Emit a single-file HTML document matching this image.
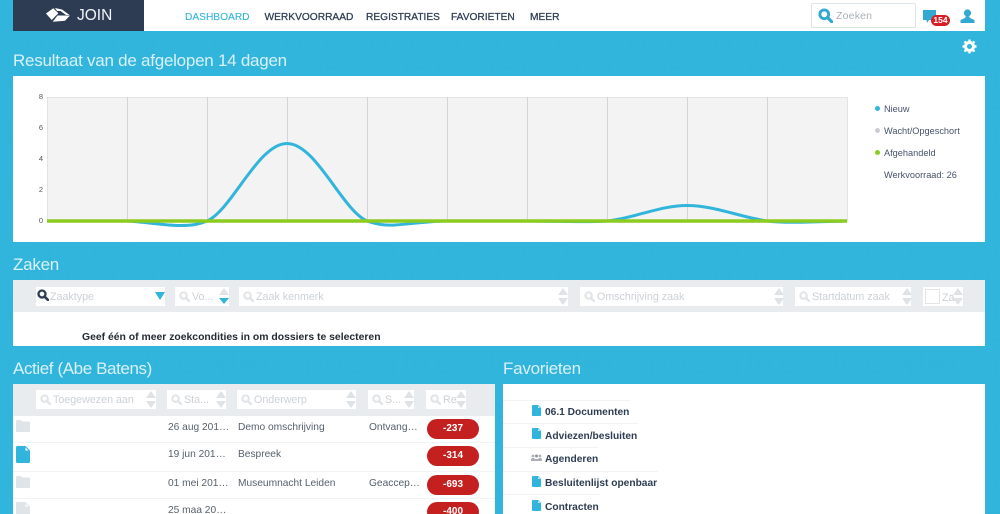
<!DOCTYPE html>
<html lang="nl">
<head>
<meta charset="utf-8">
<title>JOIN Dashboard</title>
<style>
html,body{margin:0;padding:0;width:1000px;height:514px;overflow:hidden;background:#31b5dc;font-family:"Liberation Sans",sans-serif;}
body{position:relative;}
.a{position:absolute;white-space:nowrap;}
.box{position:absolute;background:#fff;}
.nav{position:absolute;top:11px;font-size:10.2px;color:#2e3d52;line-height:13px;white-space:nowrap;-webkit-text-stroke:.25px #2e3d52;}
.h{position:absolute;color:#d9f1f8;font-size:17px;line-height:22px;white-space:nowrap;letter-spacing:-.25px;}
.f{position:absolute;background:#fff;height:19px;font-size:10.7px;line-height:20px;color:#ccd1d6;white-space:nowrap;overflow:hidden;}
.f span{position:absolute;top:0;}
.f svg{position:absolute;left:4px;top:4px;}
.f svg.s{top:1px;width:10px;height:17px;}
.t{position:absolute;font-size:10.2px;line-height:14px;color:#56606c;white-space:nowrap;}
.b{position:absolute;left:427px;width:52px;height:20px;border-radius:10px;background:#c52020;color:#fff;font-size:10px;font-weight:700;line-height:20px;text-align:center;}
.r{position:absolute;height:1px;background:#f1f3f5;}
.l{position:absolute;left:545px;font-size:10.2px;font-weight:700;line-height:14px;color:#2e3d52;white-space:nowrap;}
.leg{position:absolute;left:884px;font-size:9.2px;line-height:12px;color:#46526a;white-space:nowrap;}
.dot{position:absolute;left:875px;width:5px;height:5px;border-radius:50%;}
.y{position:absolute;left:37px;width:6px;font-size:7.5px;line-height:8px;color:#555;text-align:right;}
</style>
</head>
<body>
<svg class="a" style="left:0;top:0;" width="1000" height="514">
<defs>
<pattern id="bgp" width="86" height="58" patternUnits="userSpaceOnUse">
<path d="M8 6V24H20M34 14H50V30M62 4V20M70 10H82V18H70ZM14 38H28V52M42 36V50H56M68 34V52" fill="none" stroke="#30b2d9" stroke-width="1"/>
</pattern>
</defs>
<rect width="1000" height="514" fill="url(#bgp)"/>
</svg>
<svg width="0" height="0" style="position:absolute">
<defs>
<symbol id="mag" viewBox="0 0 12 12"><circle cx="5" cy="5" r="3.5" fill="none" stroke="currentColor" stroke-width="2.3"/><path d="M7.8 7.8L11 11" stroke="currentColor" stroke-width="2.6" stroke-linecap="round"/></symbol>
<symbol id="sort" viewBox="0 0 10 17"><path d="M5 0L10 7H0Z" fill="#dfe3e6"/><path d="M0 10H10L5 17Z" fill="#dfe3e6"/></symbol>
<symbol id="sortb" viewBox="0 0 10 17"><path d="M5 0L10 7H0Z" fill="#dfe3e6"/><path d="M0 10H10L5 16Z" fill="#31b5dc"/></symbol>
<symbol id="doc" viewBox="0 0 14 17"><path d="M1.5 0H9.5L14 4.5V15.5A1.500 1.500 0 0 1 12.5 17H1.5A1.500 1.500 0 0 1 0 15.5V1.500A1.500 1.500 0 0 1 1.5 0Z" fill="currentColor"/><path d="M9.5 1.500L12.500 4.500H9.500Z" fill="#fff"/></symbol>
<symbol id="folder" viewBox="0 0 14 12"><path d="M1 0H5L6.500 1.500H13A1 1 0 0 1 14 2.500V11A1 1 0 0 1 13 12H1A1 1 0 0 1 0 11V1A1 1 0 0 1 1 0Z" fill="#dfe4e8"/></symbol>
</defs>
</svg>

<!-- Header -->
<div class="box" style="left:13px;top:0;width:972px;height:31px;"></div>
<div class="a" style="left:13px;top:0;width:131px;height:31px;background:#2d3c53;"></div>
<svg class="a" style="left:40px;top:0;" width="40" height="31" viewBox="40 0 40 31">
<path d="M46 13.500L53.300 8.300L58.300 13.300L51.700 20Z" fill="#fff"/>
<path d="M55 8L62 9.500L69.500 15H66L60.500 11L57 11Z" fill="#fff"/>
<path d="M57.500 15.500H70L65 20.700L52.700 21.700Z" fill="#fff"/>
</svg>
<div class="a" style="left:77px;top:6px;font-size:15.5px;line-height:20px;color:#f2f5f7;">JOIN</div>
<div class="nav" style="left:185px;color:#31b5dc;-webkit-text-stroke:.1px #31b5dc;">DASHBOARD</div>
<div class="nav" style="left:264.5px;">WERKVOORRAAD</div>
<div class="nav" style="left:366px;">REGISTRATIES</div>
<div class="nav" style="left:451px;">FAVORIETEN</div>
<div class="nav" style="left:530px;">MEER</div>

<div class="a" style="left:811px;top:3px;width:103px;height:23px;border:1px solid #dde5ea;border-radius:2px;background:#fff;"></div>
<svg class="a" style="left:818px;top:8px;color:#31a9d2;" width="15" height="15"><use href="#mag"/></svg>
<div class="a" style="left:836px;top:9px;font-size:10.500px;line-height:14px;color:#a9afb4;letter-spacing:.2px;">Zoeken</div>
<svg class="a" style="left:923px;top:10px;" width="14" height="14" viewBox="0 0 14 14"><path d="M0 0H13V10H6L4 13L3.500 10H0Z" fill="#31a9d2"/></svg>
<div class="a" style="left:931px;top:15px;width:19px;height:11px;border-radius:6px;background:#d81f26;color:#fff;font-size:8.500px;font-weight:700;line-height:11px;text-align:center;">154</div>
<svg class="a" style="left:960px;top:9px;" width="15" height="14" viewBox="0 0 15 14"><circle cx="7.500" cy="4" r="3.600" fill="#31a9d2"/><path d="M5.500 7.500H9.500L10 9L14.500 11V14H.5V11L5 9Z" fill="#31a9d2"/></svg>

<!-- Gear -->
<svg class="a" style="left:962px;top:39px;" width="15" height="15" viewBox="0 0 15 15"><circle cx="7.500" cy="7.500" r="4" fill="none" stroke="#fff" stroke-width="3"/><path d="M7.500 .5V3M7.500 12V14.500M.5 7.500H3M12 7.500H14.500M2.500 2.500L4.200 4.200M10.800 10.800L12.500 12.500M2.500 12.500L4.200 10.800M10.800 4.200L12.500 2.500" stroke="#fff" stroke-width="2.400"/></svg>

<!-- Chart panel -->
<div class="h" style="left:13px;top:50px;">Resultaat van de afgelopen 14 dagen</div>
<div class="box" style="left:13px;top:76px;width:972px;height:166px;"></div>
<div class="y" style="top:93px;">8</div>
<div class="y" style="top:124px;">6</div>
<div class="y" style="top:155px;">4</div>
<div class="y" style="top:186px;">2</div>
<div class="y" style="top:217px;">0</div>
<svg class="a" style="left:40px;top:90px;" width="820" height="140" viewBox="40 90 820 140">
<rect x="47.500" y="97.500" width="800" height="124" fill="#f3f3f3" stroke="#e3e3e3"/>
<path d="M127.500 97V221M207.500 97V221M287.500 97V221M367.500 97V221M447.500 97V221M527.500 97V221M607.500 97V221M687.500 97V221M767.500 97V221" stroke="#d2d4d9" stroke-width="1"/>
<path d="M47 221H127C145 222 165 225.500 180 225.500C193 225.500 200 224 207 221C232 210 258 143.500 287 143.500C316 143.500 342 210 367 221C375 224 385 225.500 395 225C412 224 430 221 447 221H527C550 221 585 222.500 607 221C635 218 660 205.500 687 205.500C714 205.500 740 217 767 221C780 222.500 795 222.500 810 222L847 221" fill="none" stroke="#33b5db" stroke-width="3"/>
<path d="M47 221H847" fill="none" stroke="#8ccc1e" stroke-width="3.500"/>
</svg>
<div class="dot" style="top:105.500px;background:#31b5dc;"></div>
<div class="leg" style="top:102.500px;">Nieuw</div>
<div class="dot" style="top:127.500px;background:#c9ccd1;"></div>
<div class="leg" style="top:124.500px;">Wacht/Opgeschort</div>
<div class="dot" style="top:149.500px;background:#8ccc1e;"></div>
<div class="leg" style="top:146.500px;">Afgehandeld</div>
<div class="leg" style="top:168.500px;">Werkvoorraad: 26</div>

<!-- Zaken -->
<div class="h" style="left:13px;top:254px;">Zaken</div>
<div class="box" style="left:13px;top:280px;width:972px;height:66px;"></div>
<div class="a" style="left:13px;top:280px;width:972px;height:32px;background:#e8ecef;"></div>

<div class="f" style="left:36px;top:287px;width:129px;"><svg style="left:1px;top:2px;color:#2d3c53;" width="12" height="12"><use href="#mag"/></svg><span style="left:14px;">Zaaktype</span></div>
<svg class="a" style="left:155px;top:292px;" width="10" height="8" viewBox="0 0 10 8"><path d="M0 0H10L5 8Z" fill="#31b5dc"/></svg>

<div class="f" style="left:175px;top:287px;width:54px;"><svg style="color:#e2e5e8;" width="11" height="11"><use href="#mag"/></svg><span style="left:17px;">Vo...</span><svg class="s" style="left:44px;"><use href="#sortb"/></svg></div>
<div class="f" style="left:239px;top:287px;width:329px;"><svg style="color:#e2e5e8;" width="11" height="11"><use href="#mag"/></svg><span style="left:17px;">Zaak kenmerk</span><svg class="s" style="left:319px;"><use href="#sort"/></svg></div>
<div class="f" style="left:580px;top:287px;width:203px;"><svg style="color:#e2e5e8;" width="11" height="11"><use href="#mag"/></svg><span style="left:17px;">Omschrijving zaak</span><svg class="s" style="left:194px;"><use href="#sort"/></svg></div>
<div class="f" style="left:795px;top:287px;width:116px;"><svg style="color:#e2e5e8;" width="11" height="11"><use href="#mag"/></svg><span style="left:17px;">Startdatum zaak</span><svg class="s" style="left:107px;"><use href="#sort"/></svg></div>
<div class="f" style="left:923px;top:287px;width:40px;"><div style="position:absolute;left:2px;top:2px;width:13px;height:13px;border:1px solid #e2e5e8;"></div><span style="left:19px;top:1px;">Za</span><svg class="s" style="left:30px;"><use href="#sort"/></svg></div>

<div class="a" style="left:82px;top:331px;font-size:10.400px;font-weight:700;line-height:14px;color:#252b33;">Geef één of meer zoekcondities in om dossiers te selecteren</div>

<!-- Actief -->
<div class="h" style="left:13px;top:358px;letter-spacing:-.4px;">Actief (Abe Batens)</div>
<div class="box" style="left:13px;top:384px;width:482px;height:130px;"></div>
<div class="a" style="left:13px;top:384px;width:482px;height:32px;background:#e8ecef;"></div>

<div class="f" style="left:36px;top:390px;width:120px;"><svg style="color:#e2e5e8;" width="11" height="11"><use href="#mag"/></svg><span style="left:17px;">Toegewezen aan</span><svg class="s" style="left:110px;"><use href="#sort"/></svg></div>
<div class="f" style="left:167px;top:390px;width:59px;"><svg style="color:#e2e5e8;" width="11" height="11"><use href="#mag"/></svg><span style="left:17px;">Sta...</span><svg class="s" style="left:49px;"><use href="#sort"/></svg></div>
<div class="f" style="left:237px;top:390px;width:119px;"><svg style="color:#e2e5e8;" width="11" height="11"><use href="#mag"/></svg><span style="left:17px;">Onderwerp</span><svg class="s" style="left:109px;"><use href="#sort"/></svg></div>
<div class="f" style="left:368px;top:390px;width:46px;"><svg style="color:#e2e5e8;" width="11" height="11"><use href="#mag"/></svg><span style="left:17px;">S...</span><svg class="s" style="left:36px;"><use href="#sort"/></svg></div>
<div class="f" style="left:426px;top:390px;width:40px;"><svg style="color:#e2e5e8;" width="11" height="11"><use href="#mag"/></svg><span style="left:17px;">Re...</span><svg class="s" style="left:30px;"><use href="#sort"/></svg></div>

<svg class="a" style="left:16px;top:420px;" width="14" height="12"><use href="#folder"/></svg>
<div class="t" style="left:168px;top:421px;">26 aug 201…</div>
<div class="t" style="left:238px;top:421px;">Demo omschrijving</div>
<div class="t" style="left:369px;top:421px;">Ontvang…</div>
<div class="b" style="top:419px;">-237</div>
<div class="r" style="left:13px;top:442px;width:482px;"></div>

<svg class="a" style="left:16px;top:446px;color:#31b5dc;" width="14" height="17"><use href="#doc"/></svg>
<div class="t" style="left:168px;top:448px;">19 jun 201…</div>
<div class="t" style="left:238px;top:448px;">Bespreek</div>
<div class="b" style="top:446px;">-314</div>
<div class="r" style="left:13px;top:471px;width:482px;"></div>

<svg class="a" style="left:16px;top:476px;" width="14" height="12"><use href="#folder"/></svg>
<div class="t" style="left:168px;top:477px;">01 mei 201…</div>
<div class="t" style="left:238px;top:477px;">Museumnacht Leiden</div>
<div class="t" style="left:369px;top:477px;">Geaccep…</div>
<div class="b" style="top:475px;">-693</div>
<div class="r" style="left:13px;top:498px;width:482px;"></div>

<svg class="a" style="left:16px;top:502px;color:#dfe4e8;" width="14" height="17"><use href="#doc"/></svg>
<div class="t" style="left:168px;top:504px;">25 maa 20…</div>
<div class="b" style="top:502px;">-400</div>

<!-- Favorieten -->
<div class="h" style="left:503px;top:358px;">Favorieten</div>
<div class="box" style="left:503px;top:384px;width:482px;height:130px;"></div>
<div class="r" style="left:503px;top:400px;width:127px;"></div>
<svg class="a" style="left:532px;top:405px;color:#31b5dc;" width="9" height="11"><use href="#doc"/></svg>
<div class="l" style="top:406px;">06.1 Documenten</div>
<div class="r" style="left:503px;top:423px;width:135px;"></div>
<svg class="a" style="left:532px;top:428px;color:#31b5dc;" width="9" height="11"><use href="#doc"/></svg>
<div class="l" style="top:430px;">Adviezen/besluiten</div>
<div class="r" style="left:503px;top:447px;width:95px;"></div>
<svg class="a" style="left:531px;top:454px;" width="11" height="8" viewBox="0 0 11 8"><circle cx="2" cy="2" r="1.400" fill="#aab0b6"/><circle cx="5.500" cy="2" r="1.500" fill="#8f969d"/><circle cx="9" cy="2" r="1.400" fill="#aab0b6"/><path d="M0 7V5L1 4H3L4 5H7L8 4H10L11 5V7Z" fill="#aab0b6"/></svg>
<div class="l" style="top:453px;">Agenderen</div>
<div class="r" style="left:503px;top:471px;width:155px;"></div>
<svg class="a" style="left:532px;top:476px;color:#31b5dc;" width="9" height="11"><use href="#doc"/></svg>
<div class="l" style="top:477px;">Besluitenlijst openbaar</div>
<div class="r" style="left:503px;top:494px;width:96px;"></div>
<svg class="a" style="left:532px;top:500px;color:#31b5dc;" width="9" height="11"><use href="#doc"/></svg>
<div class="l" style="top:501px;">Contracten</div>
</body>
</html>
